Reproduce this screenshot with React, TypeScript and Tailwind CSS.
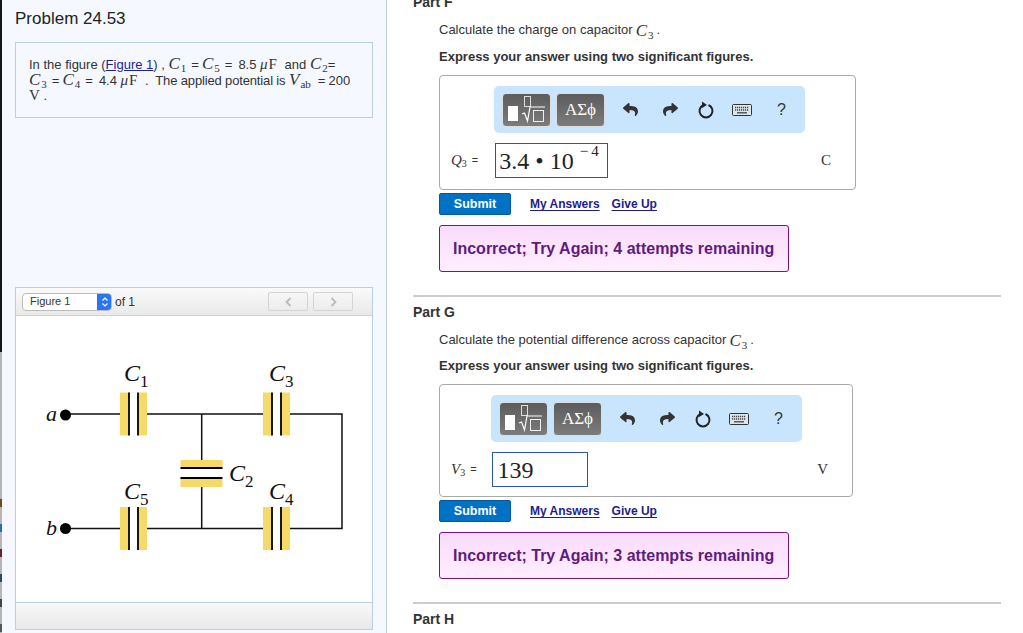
import { FaReply, FaShare } from 'react-icons/fa'

const serif = 'font-["Liberation_Serif",serif]'

function MathVar({ name, sub }: { name: string; sub?: string }) {
  return (
    <span className={`${serif} whitespace-nowrap leading-none`}>
      <i className="text-[17px] leading-none">{name}</i>
      {sub && <span className="relative top-[3px] ml-[1px] text-[11px] leading-none">{sub}</span>}
    </span>
  )
}

function Unit() {
  return (
    <span className={`${serif} mr-[3px] text-[15px] leading-none tracking-[1px]`}>
      <i>μ</i>F
    </span>
  )
}

// equals sign with the wider spacing the math renderer gives it
function Eq() {
  return <span className="mr-[3px] ml-[5px]">=</span>
}

function Toolbar({ left }: { left: string }) {
  return (
    <div className={`${left} flex h-[47px] w-[311px] items-center rounded-[5px] bg-[#c9e4fd] pl-2`}>
      <button className="flex h-[34px] w-[49px] items-center justify-center rounded-[4px] border border-[#ddd] bg-gradient-to-b from-[#5c5c5c] to-[#7c7c7c]">
        <svg width="40" height="30" viewBox="0 0 40 30">
          <rect x="1" y="11" width="10" height="15" fill="#fff" />
          <rect x="17.500" y="1.500" width="6" height="10" fill="none" stroke="#ddd" />
          <path d="M15 19l2.500 -1 3 8 2.500 -14h15" fill="none" stroke="#fff" strokeWidth="1.200" />
          <rect x="26.500" y="15.500" width="10" height="11" fill="none" stroke="#eee" />
        </svg>
      </button>
      <button
        className={`${serif} ml-[5px] flex h-[34px] w-[49px] items-center justify-center rounded-[4px] border border-[#ddd] bg-gradient-to-b from-[#5c5c5c] to-[#7c7c7c] text-[17px] text-white`}
      >
        AΣϕ
      </button>
      <FaReply className="ml-[18px] text-[15px] text-[#333]" />
      <FaShare className="ml-[25px] text-[15px] text-[#333]" />
      <svg className="ml-[19px]" width="18" height="18" viewBox="0 0 18 18">
        <path d="M11.500 4a6.500 6.500 0 1 1 -5 0" fill="none" stroke="#222" strokeWidth="2" />
        <path d="M5 0.500l5 3.500 -5 3z" fill="#222" />
      </svg>
      <svg className="ml-[17px]" width="20" height="12" viewBox="0 0 20 12">
        <rect x="0.500" y="0.500" width="19" height="11" rx="1" fill="#dbe6ee" stroke="#333" />
        <path d="M3 3.500h14M3 6h14" stroke="#444" strokeWidth="1.300" strokeDasharray="1.200 0.800" />
        <path d="M5 8.800h10" stroke="#444" strokeWidth="1.300" />
      </svg>
      <span className="ml-[25px] text-[16px] text-[#333]">?</span>
    </div>
  )
}

interface PartProps {
  title: string
  prompt: string
  expressClass: string
  boxClass: string
  toolbarLeft: string
  symbol: string
  answerClass: string
  exponent?: boolean
  answer: string
  unit: string
  attempts: number
}

function Part(p: PartProps) {
  return (
    <section>
      <h3 className="h-[17px] text-[14px] leading-[17px] font-bold text-[#333]">{p.title}</h3>
      <div className="ml-[26px]">
        <p className="mt-[9px] flex h-[20px] items-center text-[13px] text-[#333]">
          <span className="mr-[3px]">{p.prompt}</span>
          <MathVar name="C" sub="3" />
          <span className="ml-[3px]">.</span>
        </p>
        <p className={`${p.expressClass} h-[16px] text-[13px] leading-[16px] font-bold text-[#333]`}>
          Express your answer using two significant figures.
        </p>
        <div className={`${p.boxClass} mt-[10px] rounded-[4px] border border-[#aaa] bg-white pt-[10px]`}>
          <Toolbar left={p.toolbarLeft} />
          <div className="mt-[10px] flex items-center pr-[24px] pl-[11px]">
            <span className={`${serif} text-[15px] text-[#333]`}>
              <i>{p.symbol}</i>
              <span className="relative top-[2px] text-[10px]">3</span>
            </span>
            <span className="ml-[5px] text-[11px] text-[#333]">=</span>
            <div
              className={`${p.answerClass} ${serif} flex h-[35px] items-center border border-[#2b52bb] text-[24px] text-[#222]`}
            >
              {p.answer}
              {p.exponent && (
                <span className="relative -top-[9px] ml-[6px] text-[15px] tracking-[3px]">−4</span>
              )}
            </div>
            <span className={`${serif} ml-auto text-[15px] text-[#333]`}>{p.unit}</span>
          </div>
        </div>
        <div className="mt-[3px] flex h-[22px] items-center text-[12px] font-bold">
          <button className="h-[22px] w-[72px] rounded-[2px] border border-[#005a9e] bg-[#0072c6] text-[12.500px] text-white">
            Submit
          </button>
          <a className="ml-[19px] text-[#1d1d8f] underline underline-offset-2">My Answers</a>
          <a className="ml-[12px] text-[#1d1d8f] underline underline-offset-2">Give Up</a>
        </div>
        <div className="mt-[10px] flex h-[47px] w-[350px] items-center rounded-[3px] border border-[#7d0e90] bg-gradient-to-b from-[#f9dbfc] to-[#ffeeff] pl-[13px] text-[16px] font-bold text-[#5f1b7e]">
          Incorrect; Try Again; {p.attempts} attempts remaining
        </div>
      </div>
    </section>
  )
}

function Cap({ x, y, vertical }: { x: number; y: number; vertical?: boolean }) {
  // x, y: centre of the capacitor gap
  if (vertical) {
    return (
      <g>
        <rect x={x - 21} y={y - 13} width="42" height="8" fill="#f5da67" />
        <rect x={x - 21} y={y + 5} width="42" height="9" fill="#f5da67" />
        <rect x={x - 21} y={y - 5} width="42" height="10" fill="#fff" />
        <path d={`M${x - 21} ${y - 5}h42M${x - 21} ${y + 5}h42`} stroke="#000" strokeWidth="1.800" />
      </g>
    )
  }
  return (
    <g>
      <rect x={x - 13.500} y={y - 21.500} width="9" height="43" fill="#f5da67" />
      <rect x={x + 4.500} y={y - 21.500} width="9" height="43" fill="#f5da67" />
      <rect x={x - 4.500} y={y - 21.500} width="9" height="43" fill="#fff" />
      <path d={`M${x - 4.500} ${y - 21.500}v43M${x + 4.500} ${y - 21.500}v43`} stroke="#000" strokeWidth="1.800" />
    </g>
  )
}

function Label({ x, y, sub }: { x: number; y: number; sub: string }) {
  return (
    <text x={x} y={y} fontFamily="Liberation Serif" fill="#111">
      <tspan fontSize="24" fontStyle="italic">C</tspan>
      <tspan fontSize="17" dy="6">{sub}</tspan>
    </text>
  )
}

function Circuit() {
  return (
    <svg className="h-[286px] w-[356px]" viewBox="16 316 356 286">
      <path
        d="M66 414H342V528.500H66M201.700 414V528.500"
        fill="none"
        stroke="#111"
        strokeWidth="1.500"
      />
      <Cap x={133.500} y={414} />
      <Cap x={276.500} y={414} />
      <Cap x={133.500} y={528.500} />
      <Cap x={276.500} y={528.500} />
      <Cap x={201.500} y={473} vertical />
      <circle cx="65.500" cy="415" r="5.500" fill="#000" />
      <circle cx="65.500" cy="528.500" r="5.500" fill="#000" />
      <text x="46" y="421" fontFamily="Liberation Serif" fontStyle="italic" fontSize="22" fill="#111">a</text>
      <text x="46" y="535" fontFamily="Liberation Serif" fontStyle="italic" fontSize="22" fill="#111">b</text>
      <Label x={124} y={381} sub="1" />
      <Label x={269} y={381} sub="3" />
      <Label x={229} y={481} sub="2" />
      <Label x={124} y={499} sub="5" />
      <Label x={269} y={499} sub="4" />
    </svg>
  )
}

function FigurePanel() {
  return (
    <div className="mx-[13px] mt-[169px] h-[343px] w-[358px] border border-[#b9cfe2] bg-white">
      <div className="flex h-[28px] items-center border-b border-[#c8d3dc] bg-gradient-to-b from-[#fafafa] to-[#e9e9e9] pr-[19px] pl-[6px] text-[12px] text-[#333]">
        <div className="flex h-[18px] w-[90px] items-center justify-between overflow-hidden rounded-[4px] border border-[#bbb] bg-white pl-[7px] text-[11px]">
          Figure 1
          <span className="-mr-px flex h-[18px] w-[15px] flex-col items-center justify-center rounded-r-[4px] bg-[#2a76f0] text-white">
            <svg width="8" height="12" viewBox="0 0 8 12">
              <path d="M1.500 4.500L4 2l2.500 2.500M1.500 7.500L4 10l2.500-2.500" fill="none" stroke="#fff" strokeWidth="1.200" />
            </svg>
          </span>
        </div>
        <span className="ml-[3px]">of 1</span>
        <button className="ml-auto flex h-[19px] w-[40px] items-center justify-center rounded-[2px] border border-[#d4d4d4] text-[#bbb]">
          <svg width="7" height="10" viewBox="0 0 7 10">
            <path d="M5.500 1L1.500 5l4 4" fill="none" stroke="#bbb" strokeWidth="1.800" />
          </svg>
        </button>
        <button className="ml-[5px] flex h-[19px] w-[40px] items-center justify-center rounded-[2px] border border-[#d4d4d4] text-[#bbb]">
          <svg width="7" height="10" viewBox="0 0 7 10">
            <path d="M1.500 1l4 4-4 4" fill="none" stroke="#bbb" strokeWidth="1.800" />
          </svg>
        </button>
      </div>
      <Circuit />
      <div className="h-[27px] border-t border-[#b9cfe2] bg-gradient-to-b from-[#f8f8f8] to-[#e9e9e9]" />
    </div>
  )
}

// bits of the window behind that show at the very left edge
const edgeMarks = ['bg-[#6b4a2a]', 'bg-[#2a6ea8]', 'bg-[#6a2030]', 'bg-[#2a4a6a]', 'bg-[#444]', 'bg-[#555]']

export default function App() {
  return (
    <div className='flex h-[633px] w-[1023px] overflow-hidden bg-white font-["Liberation_Sans",sans-serif]'>
      <div className="flex w-[2px] flex-col">
        <div className="h-[352px] bg-[#151515]" />
        <div className="flex flex-1 flex-col gap-[17px] bg-[#b5b5b5] pt-[147px]">
          {edgeMarks.map((c, i) => (
            <div key={i} className={`h-[8px] w-[2px] ${c}`} />
          ))}
        </div>
      </div>
      <aside className="w-[385px] border-r border-[#bccfe0] bg-[#f5f9ff]">
        <h1 className="ml-[13px] pt-[10px] text-[17px] leading-[18px] text-[#222]">Problem 24.53</h1>
        <div className="mx-[13px] mt-[14px] h-[76px] w-[358px] border border-[#b9cfe2] px-[13px] pt-[12px] text-[13px] leading-[15.500px] text-[#333]">
          <div className="h-[16px] whitespace-nowrap">
            In the figure (<a className="text-[#1d1d9f] underline">Figure 1</a>) ,{' '}
            <MathVar name="C" sub="1" /><Eq /><MathVar name="C" sub="5" /><Eq />
            <span className="ml-[3px]">8.5</span> <Unit /> and{' '}
            <MathVar name="C" sub="2" />=
          </div>
          <div className="h-[17px] whitespace-nowrap">
            <MathVar name="C" sub="3" /><Eq /><MathVar name="C" sub="4" /><Eq />
            <span className="ml-[3px]">4.4</span> <Unit /> .{' '}
            <span className="ml-[3px] tracking-[-0.15px]">The applied potential is</span>{' '}
            <MathVar name="V" sub="ab" /><span className="ml-[2px]"><Eq /></span>200
          </div>
          <div className="h-[16px]">
            <span className={`${serif} text-[15px] leading-none`}>V</span> .
          </div>
        </div>
        <FigurePanel />
      </aside>
      <main className="-mt-[6px] flex-1 pl-[26px]">
        <Part
          title="Part F"
          prompt="Calculate the charge on capacitor"
          expressClass="mt-[9px]"
          boxClass="h-[115px] w-[417px]"
          toolbarLeft="ml-[54px]"
          symbol="Q"
          answerClass="ml-[17px] w-[113px] pl-[3px]"
          exponent
          answer="3.4 • 10"
          unit="C"
          attempts={4}
        />
        <hr className="mt-[23px] w-[588px] border-t-2 border-[#ccc]" />
        <div className="mt-[7px]">
          <Part
            title="Part G"
            prompt="Calculate the potential difference across capacitor"
            expressClass="mt-[8px]"
            boxClass="h-[113px] w-[414px]"
            toolbarLeft="ml-[51px]"
            symbol="V"
            answerClass="ml-[15px] w-[96px] pl-[5px]"
            answer="139"
            unit="V"
            attempts={3}
          />
        </div>
        <hr className="mt-[23px] w-[588px] border-t-2 border-[#ccc]" />
        <div className="mt-[7px]">
          <h3 className="text-[14px] leading-[17px] font-bold text-[#333]">Part H</h3>
        </div>
      </main>
    </div>
  )
}
